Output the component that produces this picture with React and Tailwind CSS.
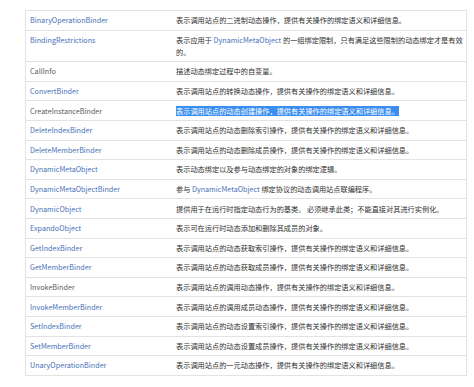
const rows = [
  { name: 'BinaryOperationBinder', desc: '表示调用站点的二进制动态操作，提供有关操作的绑定语义和详细信息。' },
  {
    name: 'BindingRestrictions',
    desc: (
      <>
        <span className="whitespace-nowrap">
          表示应用于 <span className="text-[#4470b8]">DynamicMetaObject</span> 的一组绑定限制，只有满足这些限制的动态绑定才是有效
        </span>
        <br />
        的。
      </>
    ),
  },
  { name: 'CallInfo', plain: true, desc: '描述动态绑定过程中的自变量。' },
  { name: 'ConvertBinder', desc: '表示调用站点的转换动态操作，提供有关操作的绑定语义和详细信息。' },
  { name: 'CreateInstanceBinder', plain: true, selected: true, desc: '表示调用站点的动态创建操作，提供有关操作的绑定语义和详细信息。' },
  { name: 'DeleteIndexBinder', desc: '表示调用站点的动态删除索引操作，提供有关操作的绑定语义和详细信息。' },
  { name: 'DeleteMemberBinder', desc: '表示调用站点的动态删除成员操作，提供有关操作的绑定语义和详细信息。' },
  { name: 'DynamicMetaObject', desc: '表示动态绑定以及参与动态绑定的对象的绑定逻辑。' },
  {
    name: 'DynamicMetaObjectBinder',
    desc: (
      <>
        参与 <span className="text-[#4470b8]">DynamicMetaObject</span> 绑定协议的动态调用站点联编程序。
      </>
    ),
  },
  { name: 'DynamicObject', desc: '提供用于在运行时指定动态行为的基类。 必须继承此类；不能直接对其进行实例化。' },
  { name: 'ExpandoObject', desc: '表示可在运行时动态添加和删除其成员的对象。' },
  { name: 'GetIndexBinder', desc: '表示调用站点的动态获取索引操作，提供有关操作的绑定语义和详细信息。' },
  { name: 'GetMemberBinder', desc: '表示调用站点的动态获取成员操作，提供有关操作的绑定语义和详细信息。' },
  { name: 'InvokeBinder', plain: true, desc: '表示调用站点的调用动态操作，提供有关操作的绑定语义和详细信息。' },
  { name: 'InvokeMemberBinder', desc: '表示调用站点的调用成员动态操作，提供有关操作的绑定语义和详细信息。' },
  { name: 'SetIndexBinder', desc: '表示调用站点的动态设置索引操作，提供有关操作的绑定语义和详细信息。' },
  { name: 'SetMemberBinder', desc: '表示调用站点的动态设置成员操作，提供有关操作的绑定语义和详细信息。' },
  { name: 'UnaryOperationBinder', desc: '表示调用站点的一元动态操作，提供有关操作的绑定语义和详细信息。' },
];

export default function App() {
  return (
    <div
      className="w-[474px] h-[387px] bg-white pt-[10px] pl-[25px] overflow-hidden"
      style={{ fontFamily: '"Noto Sans CJK SC", sans-serif' }}
    >
      <div className="w-[442px] border border-[#e3e3e3] text-[7.2px] leading-[12px]">
        {rows.map((row, i) => (
          <div
            key={row.name}
            className={`flex ${i > 0 ? 'border-t border-[#e3e3e3]' : ''}`}
          >
            <div
              className={`w-[150px] shrink-0 pl-[4px] py-[3.3px] ${
                row.plain ? 'text-[#5a5a5a]' : 'text-[#4470b8]'
              }`}
            >
              {row.name}
            </div>
            <div className="flex-1 min-w-0 py-[3.3px] text-[#2f2f2f]">
              {row.selected ? (
                <span className="bg-[#3b8ef0] text-white">{row.desc}</span>
              ) : (
                row.desc
              )}
            </div>
          </div>
        ))}
      </div>
    </div>
  );
}
